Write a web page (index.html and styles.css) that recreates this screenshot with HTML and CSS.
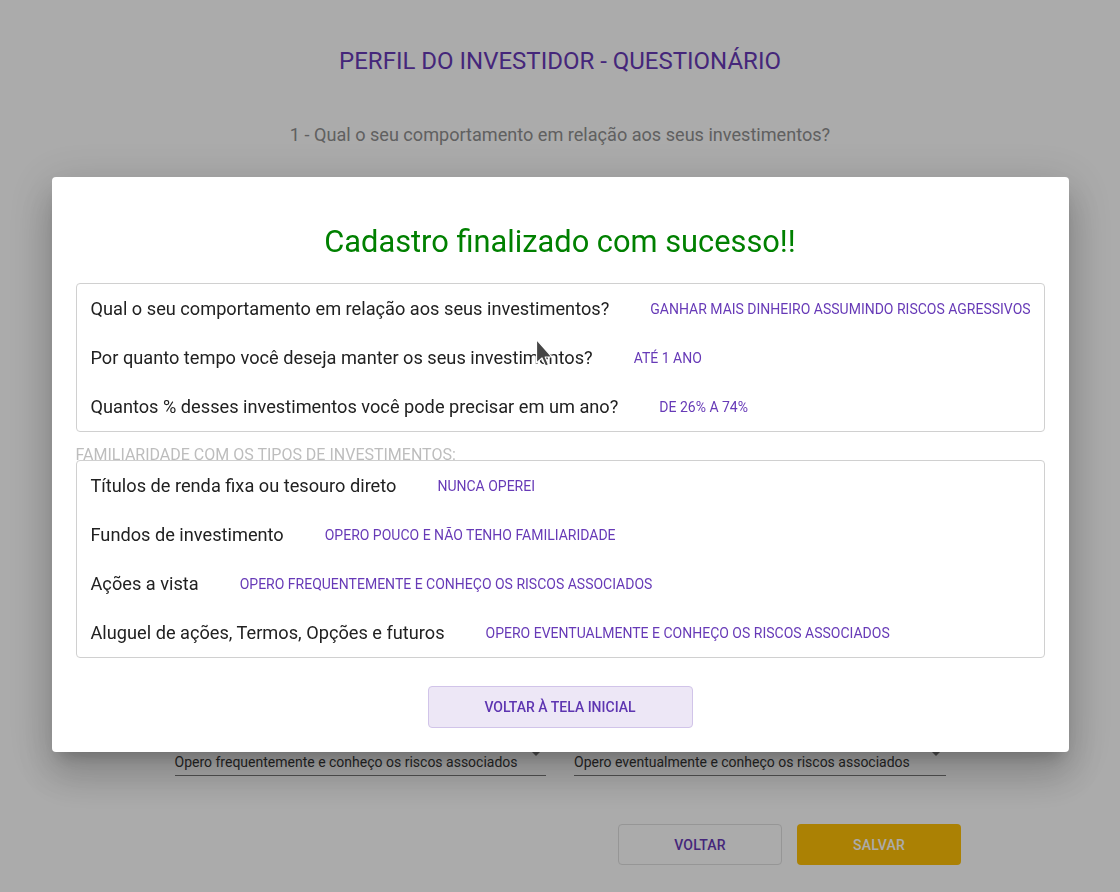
FILE: index.html
```html
<!DOCTYPE html>
<html lang="pt-BR">
<head>
<meta charset="utf-8">
<title>Perfil do Investidor</title>
<link rel="stylesheet" href="styles.css">
</head>
<body>
<div class="page">
  <h1 class="page-title">PERFIL DO INVESTIDOR - QUESTIONÁRIO</h1>
  <p class="page-question">1 - Qual o seu comportamento em relação aos seus investimentos?</p>
  <div class="hidden-body"></div>
  <div class="selects">
    <div class="select">
      <span class="select-value">Opero frequentemente e conheço os riscos associados</span>
      <span class="select-arrow"></span>
    </div>
    <div class="select">
      <span class="select-value">Opero eventualmente e conheço os riscos associados</span>
      <span class="select-arrow"></span>
    </div>
  </div>
  <div class="actions">
    <button class="btn btn-outline">VOLTAR</button>
    <button class="btn btn-amber">SALVAR</button>
  </div>
</div>

<div class="backdrop">
  <div class="dialog">
    <h2 class="dialog-title">Cadastro finalizado com sucesso!!</h2>
    <div class="list">
      <div class="row"><span class="q">Qual o seu comportamento em relação aos seus investimentos?</span><span class="a">GANHAR MAIS DINHEIRO ASSUMINDO RISCOS AGRESSIVOS</span></div>
      <div class="row"><span class="q">Por quanto tempo você deseja manter os seus investimentos?</span><span class="a">ATÉ 1 ANO</span></div>
      <div class="row"><span class="q">Quantos % desses investimentos você pode precisar em um ano?</span><span class="a">DE 26% A 74%</span></div>
    </div>
    <div class="section-label">FAMILIARIDADE COM OS TIPOS DE INVESTIMENTOS:</div>
    <div class="list">
      <div class="row"><span class="q">Títulos de renda fixa ou tesouro direto</span><span class="a">NUNCA OPEREI</span></div>
      <div class="row"><span class="q">Fundos de investimento</span><span class="a">OPERO POUCO E NÃO TENHO FAMILIARIDADE</span></div>
      <div class="row"><span class="q">Ações a vista</span><span class="a">OPERO FREQUENTEMENTE E CONHEÇO OS RISCOS ASSOCIADOS</span></div>
      <div class="row"><span class="q">Aluguel de ações, Termos, Opções e futuros</span><span class="a">OPERO EVENTUALMENTE E CONHEÇO OS RISCOS ASSOCIADOS</span></div>
    </div>
    <div class="dialog-actions">
      <button class="btn-home">VOLTAR À TELA INICIAL</button>
    </div>
  </div>
</div>

<svg class="cursor" width="18" height="30" viewBox="0 0 18 30">
  <path d="M1.5 1.5 L1.5 25 L7 20 L10.5 28 L13.5 26.8 L10.2 19 L17 19 Z" fill="#454545" stroke="#ffffff" stroke-width="1.2" stroke-linejoin="round"/>
</svg>
</body>
</html>
```
FILE: styles.css
```css
* { box-sizing: border-box; }
html, body { margin: 0; padding: 0; }
body {
  font-family: Roboto, "Noto Sans", "Liberation Sans", sans-serif;
  background: #ffffff;
  width: 1120px;
  height: 892px;
  overflow: hidden;
}
.page {
  display: flex;
  flex-direction: column;
  align-items: center;
}
.page-title {
  margin: 46px 0 0;
  font-size: 24px;
  line-height: 30px;
  font-weight: 400;
  color: #673ab7;
}
.page-question {
  margin: 47px 0 0;
  font-size: 18.1px;
  line-height: 24px;
  color: #8f8f8f;
}
.hidden-body { height: 601px; }
.selects {
  display: flex;
  gap: 28px;
  width: 771px;
}
.select {
  flex: 1;
  position: relative;
  display: flex;
  align-items: center;
  height: 28px;
  border-bottom: 1px solid #7a7a7a;
}
.select-value {
  font-size: 14px;
  color: #383838;
}
.select-arrow {
  position: absolute;
  right: 5px;
  top: 3px;
  width: 0;
  height: 0;
  border-left: 5px solid transparent;
  border-right: 5px solid transparent;
  border-top: 5px solid #757575;
}
.actions {
  display: flex;
  justify-content: flex-end;
  gap: 15px;
  width: 802px;
  margin-top: 48px;
}
.btn {
  width: 164px;
  height: 41px;
  border-radius: 4px;
  font-family: inherit;
  font-size: 14px;
  font-weight: 500;
  letter-spacing: 0.2px;
}
.btn-outline {
  background: transparent;
  border: 1px solid #e0e0e0;
  color: #673ab7;
}
.btn-amber {
  background: #ffc107;
  border: none;
  color: #ffffff;
}
.backdrop {
  position: fixed;
  inset: 0;
  background: rgba(0, 0, 0, 0.33);
  display: flex;
  justify-content: center;
  align-items: flex-start;
  padding-top: 177px;
}
.dialog {
  width: 1017px;
  background: #ffffff;
  border-radius: 4px;
  padding: 24px;
  box-shadow: 0 11px 15px -7px rgba(0,0,0,.2), 0 24px 38px 3px rgba(0,0,0,.14), 0 9px 46px 8px rgba(0,0,0,.12);
}
.dialog-title {
  margin: 23px 0 23px;
  text-align: center;
  font-size: 30.8px;
  line-height: 36px;
  font-weight: 400;
  color: #008000;
}
.list {
  border: 1px solid #d0d0d0;
  border-radius: 4px;
}
.row {
  display: flex;
  align-items: center;
  height: 49px;
  padding: 0 14px;
  white-space: nowrap;
}
.q {
  font-size: 18.2px;
  color: #212121;
}
.a {
  margin-left: 41px;
  font-size: 14px;
  color: #673ab7;
}
.section-label {
  margin-top: 17px;
  font-size: 16px;
  line-height: 11px;
  color: #bdbdbd;
}
.dialog-actions {
  display: flex;
  justify-content: center;
  margin-top: 28px;
}
.btn-home {
  width: 265px;
  height: 42px;
  background: #ede7f6;
  border: 1px solid #d1c4e9;
  border-radius: 4px;
  font-family: inherit;
  font-size: 14px;
  font-weight: 500;
  color: #5e35b1;
}
.cursor {
  position: fixed;
  left: 535px;
  top: 338px;
}
```
